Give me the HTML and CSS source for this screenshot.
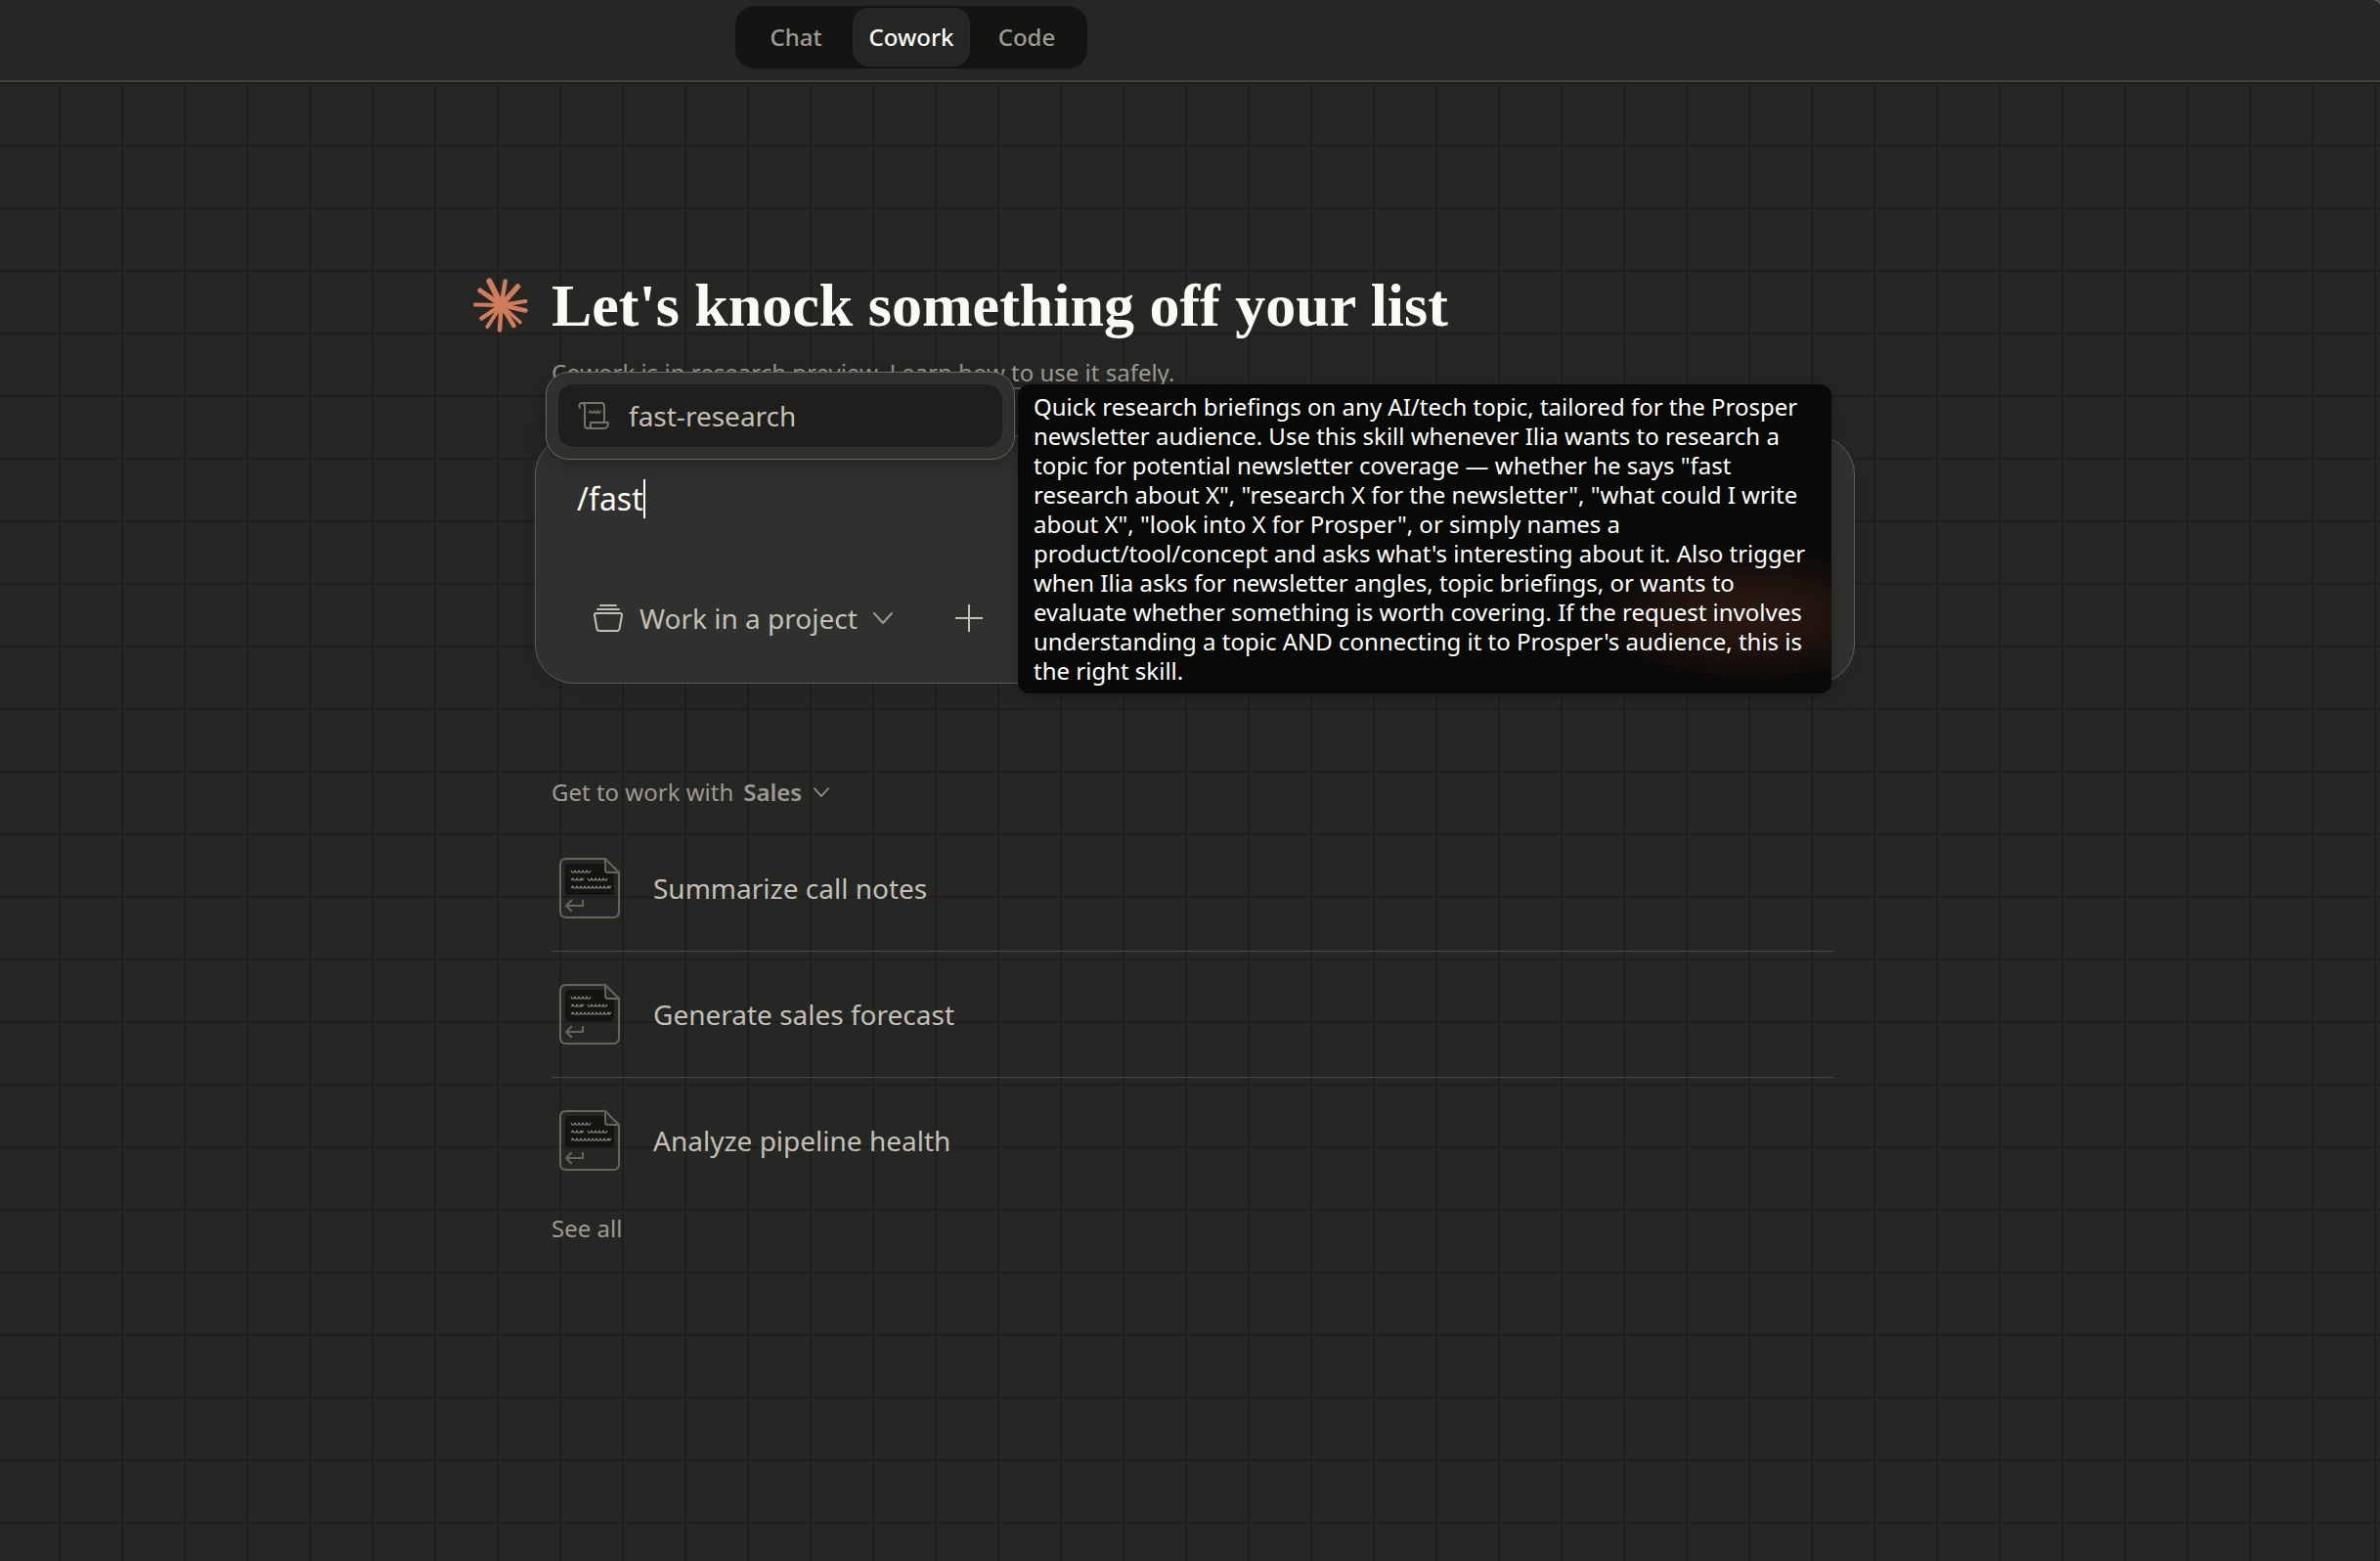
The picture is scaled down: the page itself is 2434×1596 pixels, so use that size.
FILE: index.html
```
<!DOCTYPE html>
<html lang="en">
<head>
    <meta charset="UTF-8">
    <meta name="viewport" content="width=device-width, initial-scale=1.0">
    <title>Cowork</title>
    <link rel="stylesheet" href="styles.css">
</head>
<body>
    <!-- shared icons -->
    <svg class="sprite" aria-hidden="true">
        <symbol id="icon-note" viewBox="0 0 62 62">
            <rect x="6" y="6" width="50" height="32" rx="4" fill="#141413"/>
            <path d="M47 1 L61 15 V16 H49 Q46 16 46 13 V1 Z" fill="#262624"/>
            <g fill="none" stroke="#65645d" stroke-width="2" stroke-linejoin="round">
                <path d="M47 1 H7 Q1 1 1 7 V55 Q1 61 7 61 H55 Q61 61 61 55 V15 Z"/>
                <path d="M47 1 V12 Q47 15 50 15 H61"/>
                <path d="M24 43 V49 H8 M13 43 L7 49 L13 55"/>
            </g>
            <g fill="none" stroke="#8a8880" stroke-width="1.200" stroke-linejoin="round">
                <path d="M12 13 L13 15 H15 L16 13 L17 15 H19 L20 13 L21 15 H23 L24 13 L25 15 H27 L28 13 L29 15 H31 L32 13"/>
                <path d="M12 23 L14 21 L15 23 H17 L18 21 L19 23 H21 L22 21 L23 23 L25 21 M29 21 L30 23 H32 L33 21 L34 23 H36 L37 21 L38 23 H40 L41 21 L42 23 H44 L45 21 L46 23 H48 L49 21"/>
                <path d="M12 31 L14 29 L15 31 H17 L18 29 L19 31 H21 L22 29 L23 31 H25 L26 29 L27 31 H29 L30 29 L31 31 H33 L34 29 L35 31 H37 L38 29 L39 31 H41 L42 29 L43 31 H45 L46 29 L47 31 H49 L50 29 L51 31 L53 29"/>
            </g>
        </symbol>
        <symbol id="icon-chevron" viewBox="0 0 20 12">
            <path d="M1 1 L10 11 L19 1" fill="none" stroke="currentColor" stroke-width="2" stroke-linecap="round" stroke-linejoin="round"/>
        </symbol>
    </svg>

    <header class="topbar">
        <nav class="tabs">
            <button class="tab" type="button">Chat</button>
            <button class="tab active" type="button">Cowork</button>
            <button class="tab" type="button">Code</button>
        </nav>
    </header>

    <main class="canvas">
        <div class="content">
            <div class="hero">
                <svg class="burst" viewBox="0 0 56 56" aria-hidden="true">
                    <g fill="none" stroke="#cf7c5c" stroke-linecap="round">
                        <path stroke-width="6" d="M28.700 28 L16.500 3.500"/>
                        <path stroke-width="4.500" d="M28.700 28 L32.700 3.500"/>
                        <path stroke-width="5.500" d="M28.700 28 L45.500 9"/>
                        <path stroke-width="4" d="M28.700 28 L53.500 24"/>
                        <path stroke-width="4.500" d="M28.700 28 L53.500 33.500"/>
                        <path stroke-width="3.500" d="M28.700 28 L48 45.500"/>
                        <path stroke-width="4.500" d="M28.700 28 L41.500 49"/>
                        <path stroke-width="4.500" d="M28.700 28 L27 53.500"/>
                        <path stroke-width="4" d="M28.700 28 L14.500 50"/>
                        <path stroke-width="4.500" d="M28.700 28 L8.500 41.500"/>
                        <path stroke-width="4" d="M28.700 28 L2 27.500"/>
                        <path stroke-width="5" d="M28.700 28 L7 13"/>
                    </g>
                </svg>
                <h1>Let's knock something off your list</h1>
            </div>
            <p class="preview">Cowork is in research preview. <a href="#">Learn how to use it safely.</a></p>

            <form class="composer">
                <div class="prompt">
                    <input class="prompt-input" type="text" value="/fast" aria-label="Message" autocomplete="off">
                    <span class="caret"></span>
                </div>
                <div class="toolbar">
                    <button class="project-btn" type="button">
                        <svg class="icon-project" viewBox="0 0 30 28" aria-hidden="true">
                            <g fill="none" stroke="currentColor" stroke-width="2" stroke-linecap="round" stroke-linejoin="round">
                                <path d="M7 1 H23"/>
                                <path d="M4 5 H26"/>
                                <path d="M3 9 H27 Q29.200 9 29 11 L26.500 25 Q26 27 24 27 H6 Q4 27 3.500 25 L1 11 Q0.800 9 3 9 Z"/>
                            </g>
                        </svg>
                        Work in a project
                        <svg class="chevron" aria-hidden="true"><use href="#icon-chevron"/></svg>
                    </button>
                    <button class="add-btn" type="button" aria-label="Add">
                        <svg class="icon-plus" viewBox="0 0 28 28" aria-hidden="true">
                            <path d="M14 0 V28 M0 14 H28" fill="none" stroke="currentColor" stroke-width="2"/>
                        </svg>
                    </button>
                </div>

                <div class="menu">
                    <button class="menu-item" type="button">
                        <svg class="icon-scroll" viewBox="0 0 32 28" aria-hidden="true">
                            <g fill="none" stroke="currentColor" stroke-width="2" stroke-linecap="round" stroke-linejoin="round">
                                <path d="M2 6 Q0 2 4 1 H24 Q27 1 27 4 V20"/>
                                <path d="M4 1 Q7 1 7 4 V24 Q7 27 10 27 H27 Q31 27 31 21 H13 V24 Q13 27 10 27"/>
                                <path stroke-width="1.500" d="M11 11 L13 9 Q14 12 15 11 L17 9 Q18 12 19 11 L20 9 Q21 12 22 11 L23 9"/>
                            </g>
                        </svg>
                        fast-research
                    </button>
                </div>

                <div class="tooltip" role="tooltip">
                    Quick research briefings on any AI/tech topic, tailored for the Prosper<br>
                    newsletter audience. Use this skill whenever Ilia wants to research a<br>
                    topic for potential newsletter coverage — whether he says "fast<br>
                    research about X", "research X for the newsletter", "what could I write<br>
                    about X", "look into X for Prosper", or simply names a<br>
                    product/tool/concept and asks what's interesting about it. Also trigger<br>
                    when Ilia asks for newsletter angles, topic briefings, or wants to<br>
                    evaluate whether something is worth covering. If the request involves<br>
                    understanding a topic AND connecting it to Prosper's audience, this is<br>
                    the right skill.
                </div>
            </form>

            <section class="suggestions">
                <div class="suggestions-head">
                    <span>Get to work with</span>
                    <button class="role-btn" type="button">
                        Sales
                        <svg class="chevron small" aria-hidden="true"><use href="#icon-chevron"/></svg>
                    </button>
                </div>
                <ul class="suggestion-list">
                    <li>
                        <button class="suggestion" type="button">
                            <svg class="icon-note" aria-hidden="true"><use href="#icon-note"/></svg>
                            Summarize call notes
                        </button>
                    </li>
                    <li>
                        <button class="suggestion" type="button">
                            <svg class="icon-note" aria-hidden="true"><use href="#icon-note"/></svg>
                            Generate sales forecast
                        </button>
                    </li>
                    <li>
                        <button class="suggestion" type="button">
                            <svg class="icon-note" aria-hidden="true"><use href="#icon-note"/></svg>
                            Analyze pipeline health
                        </button>
                    </li>
                </ul>
                <a class="see-all" href="#">See all</a>
            </section>
        </div>
    </main>
</body>
</html>
```
FILE: styles.css
```
* {
    box-sizing: border-box;
}

html {
    background-color: #000000;
}

body {
    margin: 0;
    min-height: 100vh;
    display: flex;
    flex-direction: column;
    border-top-right-radius: 8px 6px;
    background-color: #262624;
    box-shadow: 0 0 0 2px #5e5d59;
    color: #c2c0b6;
    font-family: "Noto Sans", sans-serif;
    font-size: 24px;
    line-height: 32px;
}

button {
    border: 0;
    padding: 0;
    background: none;
    color: inherit;
    font: inherit;
    cursor: pointer;
}

a {
    color: inherit;
}

svg {
    flex-shrink: 0;
}

.sprite {
    position: absolute;
    width: 0;
    height: 0;
}

/* Top bar */
.topbar {
    display: flex;
    justify-content: center;
    padding: 6px 570px 12px 0;
    border-bottom: 2px solid #41413e;
}

.tabs {
    display: grid;
    grid-template-columns: repeat(3, 1fr);
    width: 360px;
    padding: 3px;
    border-radius: 20px;
    background-color: #141413;
}

.tab {
    height: 58px;
    border-radius: 16px;
    color: #9c9a92;
    font-weight: 500;
}

.tab.active {
    background-color: #262624;
    box-shadow: 0 0 0 1px #2b2b29;
    color: #faf9f5;
}

/* Grid paper background */
.canvas {
    flex: 1;
    padding: 191px 0 64px 10px;
    background-image:
        linear-gradient(#1f1e1d 2px, transparent 2px),
        linear-gradient(90deg, #1f1e1d 2px, transparent 2px);
    background-size: 64px 64px;
    background-position: 60px 0;
}

.content {
    max-width: 1350px;
    margin: 0 auto;
}

.hero {
    display: flex;
    align-items: center;
    gap: 24px;
    margin-left: -63px;
}

.burst {
    width: 56px;
    height: 56px;
}

h1 {
    margin: 0;
    color: #faf9f5;
    font-family: "Liberation Serif", serif;
    font-size: 62px;
    font-weight: 700;
    line-height: 74px;
}

.preview {
    margin: 16px 0 48px 17px;
    color: #9c9a92;
}

.preview a {
    text-underline-offset: 6px;
    text-decoration-thickness: 2px;
    text-decoration-color: #5e5d59;
}

/* Composer */
.composer {
    position: relative;
    padding: 44px 42px 34px;
    border: 1px solid #5e5d59;
    border-radius: 40px;
    background-color: #30302e;
    box-shadow: 0 4px 40px rgba(0, 0, 0, 0.1);
}

.prompt {
    display: flex;
    align-items: flex-start;
    min-height: 110px;
}

.prompt-input {
    field-sizing: content;
    height: 40px;
    padding: 0;
    border: 0;
    outline: 0;
    background: none;
    color: #faf9f5;
    font-family: inherit;
    font-size: 32px;
    line-height: 40px;
}

.caret {
    width: 2px;
    height: 40px;
    background-color: #ffffff;
}

.toolbar {
    display: flex;
    align-items: center;
    gap: 30px;
}

.project-btn {
    display: flex;
    align-items: center;
    gap: 16px;
    height: 64px;
    padding: 0 16px;
    font-size: 28px;
}

.icon-project {
    width: 32px;
    height: 28px;
}

.chevron {
    width: 20px;
    height: 12px;
    color: #9c9a92;
}

.chevron.small {
    width: 16px;
    height: 10px;
}

.add-btn {
    display: grid;
    place-items: center;
    width: 64px;
    height: 64px;
}

.icon-plus {
    width: 28px;
    height: 28px;
}

/* Slash command menu, opens over the composer */
.menu {
    position: absolute;
    top: -66px;
    left: 10px;
    width: 480px;
    padding: 12px;
    border: 1px solid #6a6964;
    border-radius: 24px;
    background-color: #30302e;
    box-shadow: 0 4px 20px rgba(0, 0, 0, 0.25);
}

.menu-item {
    display: flex;
    align-items: center;
    gap: 20px;
    width: 100%;
    height: 64px;
    padding: 0 20px;
    border-radius: 16px;
    background-color: #1f1e1d;
    font-size: 28px;
}

.icon-scroll {
    width: 32px;
    height: 28px;
    color: #73726c;
}

.tooltip {
    position: absolute;
    top: -53px;
    left: 493px;
    width: 832px;
    padding: 8px 16px;
    border-radius: 12px;
    background-color: #090908;
    background-image: radial-gradient(ellipse 170px 70px at 750px 236px, #2a1813, #22140f 40%, rgba(9, 9, 8, 0));
    box-shadow: 0 2px 12px rgba(0, 0, 0, 0.25);
    color: #ffffff;
    line-height: 30px;
}

/* Suggestions */
.suggestions {
    margin: 95px 22px 0 17px;
}

.suggestions-head {
    display: flex;
    align-items: center;
    gap: 10px;
    color: #9c9a92;
}

.role-btn {
    display: flex;
    align-items: center;
    gap: 12px;
    font-weight: 600;
}

.suggestion-list {
    margin: 18px 0 10px;
    padding: 0;
    list-style: none;
}

.suggestion-list li + li {
    border-top: 1px solid #454542;
}

.suggestion {
    display: flex;
    align-items: center;
    gap: 34px;
    width: 100%;
    height: 128px;
    padding: 0 8px;
    font-size: 28px;
    text-align: left;
}

.icon-note {
    width: 62px;
    height: 62px;
}

.see-all {
    color: #9c9a92;
    text-decoration: none;
}
```
